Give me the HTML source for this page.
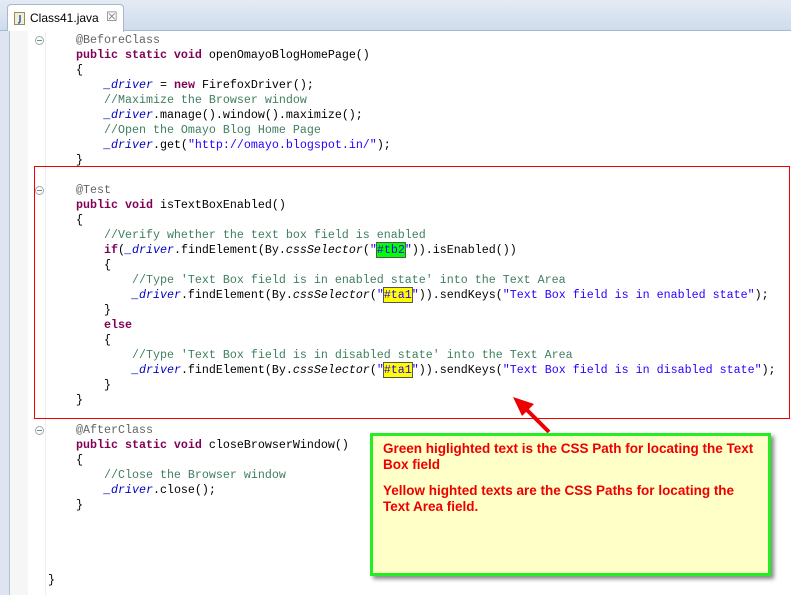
<!DOCTYPE html>
<html><head><meta charset="utf-8"><style>
body{margin:0;width:791px;height:595px;overflow:hidden;background:#fff;position:relative;font-family:"Liberation Sans",sans-serif}
#tabbar{position:absolute;left:0;top:0;width:791px;height:30px;background:linear-gradient(#e4ebf5,#cfdcec);border-bottom:1px solid #a9b8cc}
#tab{position:absolute;left:7px;top:4px;width:115px;height:27px;background:#fff;border:1px solid #a9b8cc;border-bottom:none;border-radius:4px 4px 0 0;font-size:12px}
#left{position:absolute;left:0;top:31px;width:9px;height:564px;background:#dfe4f2;border-right:1px solid #b8c0d6}
#ruler{position:absolute;left:10px;top:31px;width:18px;height:564px;background:#f6f6f6}
#gline{position:absolute;left:45px;top:31px;width:1px;height:564px;background:#eee}
.l{position:absolute;font-family:"Liberation Mono",monospace;font-size:11.67px;white-space:pre;line-height:15px;color:#000}
.k{color:#7f0055;font-weight:bold}.c{color:#3f7f5f}.s{color:#2a00ff}.a{color:#646464}.d{color:#0000c0;font-style:italic}.i{font-style:italic}
.g{background:#00ff00;outline:1px solid #555}.y{background:#ffff00;outline:1px solid #555}
.f{position:absolute;left:35px;width:9px;height:9px;border:1px solid #9aa;border-radius:50%;box-sizing:border-box}
.f:after{content:"";position:absolute;left:1px;top:3px;width:5px;height:1px;background:#788}
</style></head><body>
<div id="tabbar"><div id="tab">
<svg style="position:absolute;left:6px;top:7px" width="11" height="13"><rect x="0.5" y="0.5" width="10" height="12" fill="#f3eed8" stroke="#9a8b5a"/><path d="M6 3v6q0 2-2 2" stroke="#2b5fa8" stroke-width="1.5" fill="none"/></svg>
<span style="position:absolute;left:22px;top:6px">Class41.java</span>
<span style="position:absolute;left:98px;top:4px;color:#778;font-size:13px">☒</span>
</div></div>
<div id="left"></div><div id="ruler"></div><div id="gline"></div>
<div class="f" style="top:36px"></div><div class="f" style="top:186px"></div><div class="f" style="top:426px"></div>
<div class="l" style="left:76px;top:33px"><span class="a">@BeforeClass</span>
<span class="k">public static void</span> openOmayoBlogHomePage()
{
    <span class="d">_driver</span> = <span class="k">new</span> FirefoxDriver();
    <span class="c">//Maximize the Browser window</span>
    <span class="d">_driver</span>.manage().window().maximize();
    <span class="c">//Open the Omayo Blog Home Page</span>
    <span class="d">_driver</span>.get(<span class="s">"http://omayo.blogspot.in/"</span>);
}

<span class="a">@Test</span>
<span class="k">public void</span> isTextBoxEnabled()
{
    <span class="c">//Verify whether the text box field is enabled</span>
    <span class="k">if</span>(<span class="d">_driver</span>.findElement(By.<span class="i">cssSelector</span>(<span class="s">"<span class="g">#tb2</span>"</span>)).isEnabled())
    {
        <span class="c">//Type 'Text Box field is in enabled state' into the Text Area</span>
        <span class="d">_driver</span>.findElement(By.<span class="i">cssSelector</span>(<span class="s">"<span class="y">#ta1</span>"</span>)).sendKeys(<span class="s">"Text Box field is in enabled state"</span>);
    }
    <span class="k">else</span>
    {
        <span class="c">//Type 'Text Box field is in disabled state' into the Text Area</span>
        <span class="d">_driver</span>.findElement(By.<span class="i">cssSelector</span>(<span class="s">"<span class="y">#ta1</span>"</span>)).sendKeys(<span class="s">"Text Box field is in disabled state"</span>);
    }
}

<span class="a">@AfterClass</span>
<span class="k">public static void</span> closeBrowserWindow()
{
    <span class="c">//Close the Browser window</span>
    <span class="d">_driver</span>.close();
}</div>
<div class="l" style="left:48px;top:573px">}</div>
<div style="position:absolute;left:34px;top:166px;width:754px;height:251px;border:1px solid #e00"></div>
<svg style="position:absolute;left:0;top:0" width="791" height="595"><path d="M549 432 L527 410" stroke="#e00" stroke-width="4"/><path d="M513 397 L534 404 L522 416 Z" fill="#e00"/></svg>
<div style="position:absolute;left:370px;top:433px;width:395px;height:137px;background:#ffffc8;border:3px solid #22ee22;box-shadow:3px 3px 4px #888;color:#e00;font-weight:bold;font-size:13.5px;line-height:16px;white-space:nowrap">
<div style="position:absolute;left:10px;top:5px">Green higlighted text is the CSS Path for locating the Text<br>Box field</div>
<div style="position:absolute;left:10px;top:47px">Yellow highted texts are the CSS Paths for locating the<br>Text Area field.</div>
</div>
</body></html>
